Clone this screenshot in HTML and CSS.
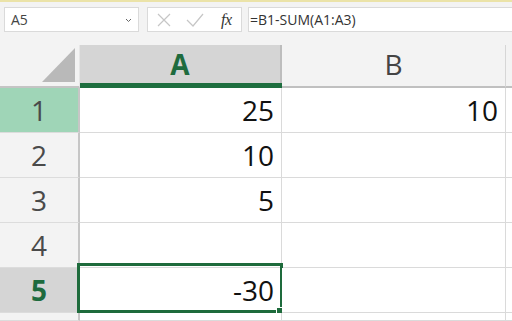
FILE: index.html
```html
<!DOCTYPE html>
<html lang="en">
<head>
<meta charset="UTF-8" />
<title>Sheet</title>
<link rel="stylesheet" href="styles.css">
</head>
<body>
  <div class="toolbar">
    <div class="namebox">
      <span>A5</span>
      <svg class="chevron" width="7" height="5" viewBox="0 0 7 5"><path d="M1 1 L3.5 3.5 L6 1" fill="none" stroke="#666" stroke-width="1"/></svg>
    </div>
    <div class="fx-buttons">
      <svg class="cancel" width="14" height="14" viewBox="0 0 14 14"><path d="M1 1 L13 13 M13 1 L1 13" stroke="#c6c6c6" stroke-width="1.2" fill="none"/></svg>
      <svg class="enter" width="18" height="14" viewBox="0 0 18 14"><path d="M1 7 L7 13 L17 1" stroke="#c6c6c6" stroke-width="1.2" fill="none"/></svg>
      <span class="fx">fx</span>
    </div>
    <div class="formula">=B1-SUM(A1:A3)</div>
  </div>

  <div class="sheet">
    <div class="corner">
      <svg width="33" height="34" viewBox="0 0 33 34"><polygon points="0,34 33,34 33,0" fill="#b9b9b9"/></svg>
    </div>
    <div class="col-head active">A</div>
    <div class="col-head">B</div>
    <div class="col-head rest"></div>

    <div class="row-head hover">1</div>
    <div class="cell">25</div>
    <div class="cell">10</div>
    <div class="cell rest"></div>

    <div class="row-head">2</div>
    <div class="cell">10</div>
    <div class="cell"></div>
    <div class="cell rest"></div>

    <div class="row-head">3</div>
    <div class="cell">5</div>
    <div class="cell"></div>
    <div class="cell rest"></div>

    <div class="row-head">4</div>
    <div class="cell"></div>
    <div class="cell"></div>
    <div class="cell rest"></div>

    <div class="row-head active">5</div>
    <div class="cell selected">-30<div class="selection"><div class="handle"></div></div></div>
    <div class="cell"></div>
    <div class="cell rest"></div>

    <!-- next row, only its top edge is in view -->
    <div class="row-head"></div>
    <div class="cell"></div>
    <div class="cell"></div>
    <div class="cell rest"></div>
  </div>
</body>
</html>
```

FILE: styles.css
```css
* {
  box-sizing: border-box;
}
body {
  margin: 0;
  background: #f3f3f3;
  font-family: 'Open Sans', 'Noto Sans', sans-serif;
  color: #333;
  overflow: hidden;
}

/* Formula bar */
.toolbar {
  height: 45px;
  border-top: 2px solid #ebe3a8;
  padding: 5px 0 0 4px;
  display: flex;
  align-items: flex-start;
}
.namebox,
.fx-buttons,
.formula {
  height: 25px;
  background: #fff;
  border: 1px solid #dadada;
  display: flex;
  align-items: center;
  font-size: 14px;
}
.namebox {
  width: 135px;
  padding: 0 6px 0 6px;
  justify-content: space-between;
  color: #444;
}
.chevron {
  margin-top: 1px;
}
.fx-buttons {
  width: 95px;
  margin-left: 8px;
  padding-left: 9px;
}
.enter {
  margin-left: 15px;
}
.fx {
  margin-left: 17px;
  font-family: 'Liberation Serif', serif;
  font-style: italic;
  font-size: 16px;
  color: #333;
  letter-spacing: -0.5px;
}
.formula {
  flex: 1;
  margin-left: 6px;
  padding-left: 1px;
  border-right: none;
}

/* Grid */
.sheet {
  display: grid;
  grid-template-columns: 80px 202px 224px 1fr;
  grid-template-rows: 43px repeat(5, 45px) 8px;
}
.corner {
  border-bottom: 2px solid #c4c4c4;
  border-right: 1px solid #e6e6e6;
  display: flex;
  justify-content: flex-end;
  align-items: flex-end;
  padding: 0 4px 4px 0;
}
.col-head {
  position: relative;
  background: #f3f3f3;
  border-bottom: 2px solid #c0c0c0;
  border-right: 1px solid #d6d6d6;
  text-align: center;
  font-size: 28px;
  line-height: 38px;
  color: #444;
}
.col-head.active {
  background: #d5d5d5;
  border-right: 2px solid #bdbdbd;
  color: #1e6b3e;
  font-weight: bold;
}
.col-head.active::after {
  content: '';
  position: absolute;
  left: 0;
  right: -3px;
  bottom: -2px;
  height: 5px;
  background: #1e6e3f;
}
.col-head.rest {
  border-right: none;
}
.row-head {
  background: #f3f3f3;
  border-right: 2px solid #c6c6c6;
  border-bottom: 1px solid #dcdcdc;
  text-align: center;
  font-size: 28px;
  line-height: 44px;
  color: #4a4a4a;
}
.row-head.hover {
  background: #9fd5b7;
}
.row-head.active {
  background: #d5d5d5;
  color: #1e6b3e;
  font-weight: bold;
}
.cell {
  position: relative;
  background: #fff;
  border-right: 1px solid #dadada;
  border-bottom: 1px solid #dadada;
  text-align: right;
  padding-right: 7px;
  font-size: 28px;
  line-height: 44px;
  color: #111;
}
.cell.rest {
  border-right: none;
}
.selection {
  position: absolute;
  left: -3px;
  top: -5px;
  right: -2px;
  bottom: -1px;
  border: 3px solid #1e6b3c;
}
.handle {
  position: absolute;
  right: -5px;
  bottom: -6px;
  width: 8px;
  height: 8px;
  background: #1e6b3c;
  box-shadow: 0 0 0 1px #fff;
}
```
